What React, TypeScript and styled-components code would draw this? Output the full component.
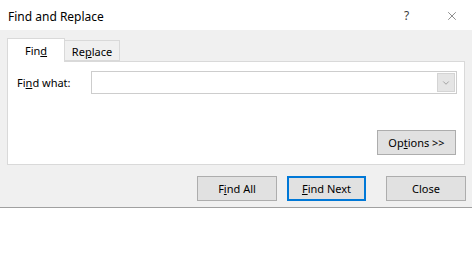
import styled, { createGlobalStyle } from "styled-components";
import { ChevronDown, X } from "lucide-react";

const GlobalStyle = createGlobalStyle`
  body {
    margin: 0;
    background: #ffffff;
    font-family: "Noto Sans", "Open Sans", sans-serif;
    color: #000000;
  }
`;

const Dialog = styled.div`
  width: 474px;
  display: flex;
  flex-direction: column;
`;

const TitleBar = styled.div`
  height: 30px;
  display: flex;
  align-items: center;
  padding: 0 0 0 8px;
  font-size: 12px;
  color: #000;
`;

const Title = styled.div`
  flex: 1;
  margin-top: 2px;
`;

const TitleButton = styled.div`
  width: 45px;
  display: flex;
  justify-content: center;
  font-size: 12px;
  color: #3c3c3c;
  margin-top: 1px;
`;

const Body = styled.div`
  background: #f0f0f0;
  height: 178px;
  border-bottom: 1px solid #a0a0a0;
  padding: 8px 0 0 7px;
  box-sizing: border-box;
  margin-right: 2px;
`;

const Tabs = styled.div`
  display: flex;
  align-items: flex-end;
  height: 23px;
`;

const Tab = styled.div<{ $active?: boolean }>`
  box-sizing: border-box;
  width: ${(p) => (p.$active ? "58px" : "55px")};
  height: ${(p) => (p.$active ? "24px" : "21px")};
  margin-bottom: ${(p) => (p.$active ? "-1px" : "0")};
  background: ${(p) => (p.$active ? "#ffffff" : "#f0f0f0")};
  border: 1px solid #d9d9d9;
  border-bottom: ${(p) => (p.$active ? "none" : "1px solid #d9d9d9")};
  border-left: ${(p) => (p.$active ? "1px solid #d9d9d9" : "none")};
  position: relative;
  z-index: ${(p) => (p.$active ? 1 : 0)};
  font-size: 11px;
  display: flex;
  align-items: center;
  justify-content: center;
  padding-top: ${(p) => (p.$active ? "0" : "1px")};
`;

const Panel = styled.div`
  width: 458px;
  height: 104px;
  box-sizing: border-box;
  background: #ffffff;
  border: 1px solid #d9d9d9;
  padding: 9px 7px 0 9px;
  display: flex;
  flex-direction: column;
`;

const FieldRow = styled.div`
  display: flex;
  align-items: center;
`;

const Label = styled.div`
  width: 74px;
  font-size: 11px;
`;

const ComboBox = styled.div`
  flex: 1;
  height: 23px;
  box-sizing: border-box;
  border: 1px solid #cdcdcd;
  display: flex;
  justify-content: flex-end;
  padding: 1px;
`;

const DropButton = styled.div`
  width: 18px;
  background: #e5e5e5;
  border: 1px solid #d4d4d4;
  box-sizing: border-box;
  display: flex;
  align-items: center;
  justify-content: center;
  color: #7a7a7a;
`;

const OptionsRow = styled.div`
  display: flex;
  justify-content: flex-end;
  margin-top: 36px;
  padding-right: 1px;
`;

const Button = styled.div<{ $default?: boolean; $w?: number; $spaced?: boolean }>`
  width: ${(p) => p.$w ?? 80}px;
  height: 25px;
  margin-left: ${(p) => (p.$spaced ? "10px" : "0")};
  box-sizing: border-box;
  background: #e1e1e1;
  border: 1px solid ${(p) => (p.$default ? "#0078d7" : "#adadad")};
  box-shadow: ${(p) => (p.$default ? "inset 0 0 0 1px #0078d7" : "none")};
  display: flex;
  align-items: center;
  justify-content: center;
  font-size: 11px;
`;

const ButtonRow = styled.div`
  display: flex;
  justify-content: flex-end;
  gap: 10px;
  margin-top: 11px;
  padding-right: 6px;
`;

export default function App() {
  return (
    <>
      <GlobalStyle />
      <Dialog>
        <TitleBar>
          <Title>Find and Replace</Title>
          <TitleButton>?</TitleButton>
          <TitleButton>
            <X size={14} strokeWidth={1} />
          </TitleButton>
        </TitleBar>
        <Body>
          <Tabs>
            <Tab $active>
              Fin<u>d</u>
            </Tab>
            <Tab>
              Re<u>p</u>lace
            </Tab>
          </Tabs>
          <Panel>
            <FieldRow>
              <Label>
                Fi<u>n</u>d what:
              </Label>
              <ComboBox>
                <DropButton>
                  <ChevronDown size={10} strokeWidth={1.5} />
                </DropButton>
              </ComboBox>
            </FieldRow>
            <OptionsRow>
              <Button $w={79}>
                Op<u>t</u>ions &gt;&gt;
              </Button>
            </OptionsRow>
          </Panel>
          <ButtonRow>
            <Button>
              F<u>i</u>nd All
            </Button>
            <Button $default $w={79}>
              <u>F</u>ind Next
            </Button>
            <Button $spaced>Close</Button>
          </ButtonRow>
        </Body>
      </Dialog>
    </>
  );
}
